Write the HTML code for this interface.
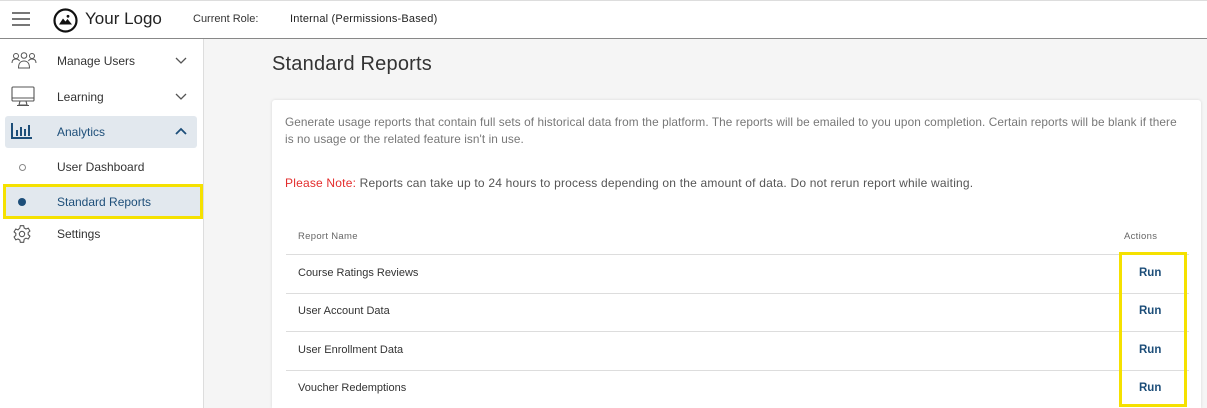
<!DOCTYPE html>
<html><head><style>
*{margin:0;padding:0;box-sizing:border-box}
html,body{width:1207px;height:408px;overflow:hidden}
body{font-family:"Liberation Sans",sans-serif;background:#f5f5f5;position:relative;color:#333}
.a{position:absolute;white-space:nowrap}
#hdr{position:absolute;left:0;top:0;width:1207px;height:39px;background:#fff;border-top:1px solid #ddd;border-bottom:1px solid #888}
#side{position:absolute;left:0;top:39px;width:204px;height:369px;background:#fff;border-right:1px solid #ddd}
.nav{font-size:12px;color:#333}
#card{position:absolute;left:272px;top:100px;width:929px;height:308px;background:#fff;border-radius:3px 3px 0 0;box-shadow:0 0 3px rgba(0,0,0,.12)}
.line{position:absolute;left:286px;width:903px;height:1px;background:#ddd}
.row{font-size:11px;color:#333}
.run{font-size:11.5px;font-weight:bold;color:#1d4e79;left:1139px}
</style></head><body>
<div id="hdr"></div>
<div class="a" style="left:12px;top:12px;width:18px;height:2px;background:#777"></div>
<div class="a" style="left:12px;top:18px;width:18px;height:2px;background:#777"></div>
<div class="a" style="left:12px;top:24px;width:18px;height:2px;background:#777"></div>
<svg class="a" style="left:53px;top:8px" width="25" height="25" viewBox="0 0 25 25"><circle cx="12.5" cy="12.5" r="11" fill="none" stroke="#111" stroke-width="2.2"/><path d="M6 16.5 L10 10.5 L12.5 13.5 L14.5 11 L19 16.5Z" fill="#111"/><circle cx="15" cy="8.3" r="1.4" fill="#111"/></svg>
<div class="a" style="left:85px;top:9px;font-size:17px;color:#222">Your Logo</div>
<div class="a" style="left:193px;top:13px;font-size:11px;color:#333">Current Role:</div>
<div class="a" style="left:290px;top:13px;font-size:11px;color:#222;letter-spacing:.2px">Internal (Permissions-Based)</div>

<div id="side"></div>
<svg class="a" style="left:11px;top:52px" width="26" height="18" viewBox="0 0 26 18" fill="none" stroke="#555" stroke-width="1"><circle cx="5" cy="4" r="2.5"/><circle cx="13" cy="3.5" r="2.8"/><circle cx="21" cy="4" r="2.5"/><path d="M1 11c0-3 2-4 4-4s3 1 3.5 2M25 11c0-3-2-4-4-4s-3 1-3.5 2M7.5 16c0-5 2.5-7 5.5-7s5.5 2 5.5 7z"/></svg>
<div class="a nav" style="left:57px;top:54px">Manage Users</div>
<svg class="a" style="left:175px;top:57px" width="12" height="8"><path d="M1 1l5 5 5-5" fill="none" stroke="#555" stroke-width="1.3"/></svg>
<svg class="a" style="left:11px;top:86px" width="24" height="21" viewBox="0 0 24 21" fill="none" stroke="#555" stroke-width="1.1"><rect x="1" y="1" width="22" height="14" rx="1"/><path d="M1 12h22M9 15l-1 4h8l-1-4M6 19.5h12"/></svg>
<div class="a nav" style="left:57px;top:90px">Learning</div>
<svg class="a" style="left:175px;top:93px" width="12" height="8"><path d="M1 1l5 5 5-5" fill="none" stroke="#555" stroke-width="1.3"/></svg>
<div class="a" style="left:5px;top:116px;width:192px;height:32px;background:#e2e8ee;border-radius:3px"></div>
<svg class="a" style="left:11px;top:123px" width="21" height="17" viewBox="0 0 21 17" fill="#1d4e79"><rect x="0" y="0" width="2" height="16"/><rect x="0" y="14" width="21" height="2"/><rect x="5" y="7" width="2" height="6"/><rect x="9" y="4" width="2" height="9"/><rect x="13" y="6" width="2" height="7"/><rect x="17" y="2" width="2" height="11"/></svg>
<div class="a nav" style="left:57px;top:125px;color:#1d4e79">Analytics</div>
<svg class="a" style="left:175px;top:127px" width="12" height="8"><path d="M1 7l5-5 5 5" fill="none" stroke="#1d4e79" stroke-width="1.8"/></svg>
<div class="a" style="left:19px;top:164px;width:7px;height:7px;border:1px solid #888;border-radius:50%"></div>
<div class="a nav" style="left:57px;top:160px">User Dashboard</div>
<div class="a" style="left:3px;top:184px;width:200px;height:35px;border:3px solid #f5e100;background:#e2e8ee"></div>
<div class="a" style="left:18px;top:198px;width:8px;height:8px;border-radius:50%;background:#1d4e79"></div>
<div class="a nav" style="left:57px;top:195px;color:#1d4e79">Standard Reports</div>
<svg class="a" style="left:12px;top:224px" width="20" height="20" viewBox="0 0 24 24" fill="none" stroke="#555" stroke-width="1.3"><circle cx="12" cy="12" r="3.2"/><path d="M10 2h4l.6 2.8 2.2 1.2 2.7-1 2 3.4-2.1 1.9v2.4l2.1 1.9-2 3.4-2.7-1-2.2 1.2L14 22h-4l-.6-2.8-2.2-1.2-2.7 1-2-3.4 2.1-1.9V11.3L2.5 9.4l2-3.4 2.7 1L9.4 4.8z"/></svg>
<div class="a nav" style="left:57px;top:227px">Settings</div>

<div class="a" style="left:272px;top:53px;font-size:20px;color:#333;letter-spacing:.2px">Standard Reports</div>
<div id="card"></div>
<div class="a" style="left:285px;top:114px;font-size:11.8px;letter-spacing:.08px;line-height:17px;color:#777">Generate usage reports that contain full sets of historical data from the platform. The reports will be emailed to you upon completion. Certain reports will be blank if there<br>is no usage or the related feature isn't in use.</div>
<div class="a" style="left:285px;top:176px;font-size:12px;letter-spacing:.2px;color:#555"><span style="color:#e32c2c">Please Note:</span> Reports can take up to 24 hours to process depending on the amount of data. Do not rerun report while waiting.</div>
<div class="a" style="left:298px;top:231px;font-size:9.5px;letter-spacing:.3px;color:#666">Report Name</div>
<div class="a" style="left:1124px;top:231px;font-size:9.5px;letter-spacing:.3px;color:#666">Actions</div>
<div class="line" style="top:254px"></div>
<div class="line" style="top:293px"></div>
<div class="line" style="top:331px"></div>
<div class="line" style="top:370px"></div>
<div class="a row" style="left:298px;top:267px">Course Ratings Reviews</div>
<div class="a row" style="left:298px;top:305px">User Account Data</div>
<div class="a row" style="left:298px;top:344px">User Enrollment Data</div>
<div class="a row" style="left:298px;top:382px">Voucher Redemptions</div>
<div class="a" style="left:1119px;top:252px;width:68px;height:155px;border:3px solid #f5e100"></div>
<div class="a run" style="top:267px">Run</div>
<div class="a run" style="top:305px">Run</div>
<div class="a run" style="top:344px">Run</div>
<div class="a run" style="top:382px">Run</div>
</body></html>
